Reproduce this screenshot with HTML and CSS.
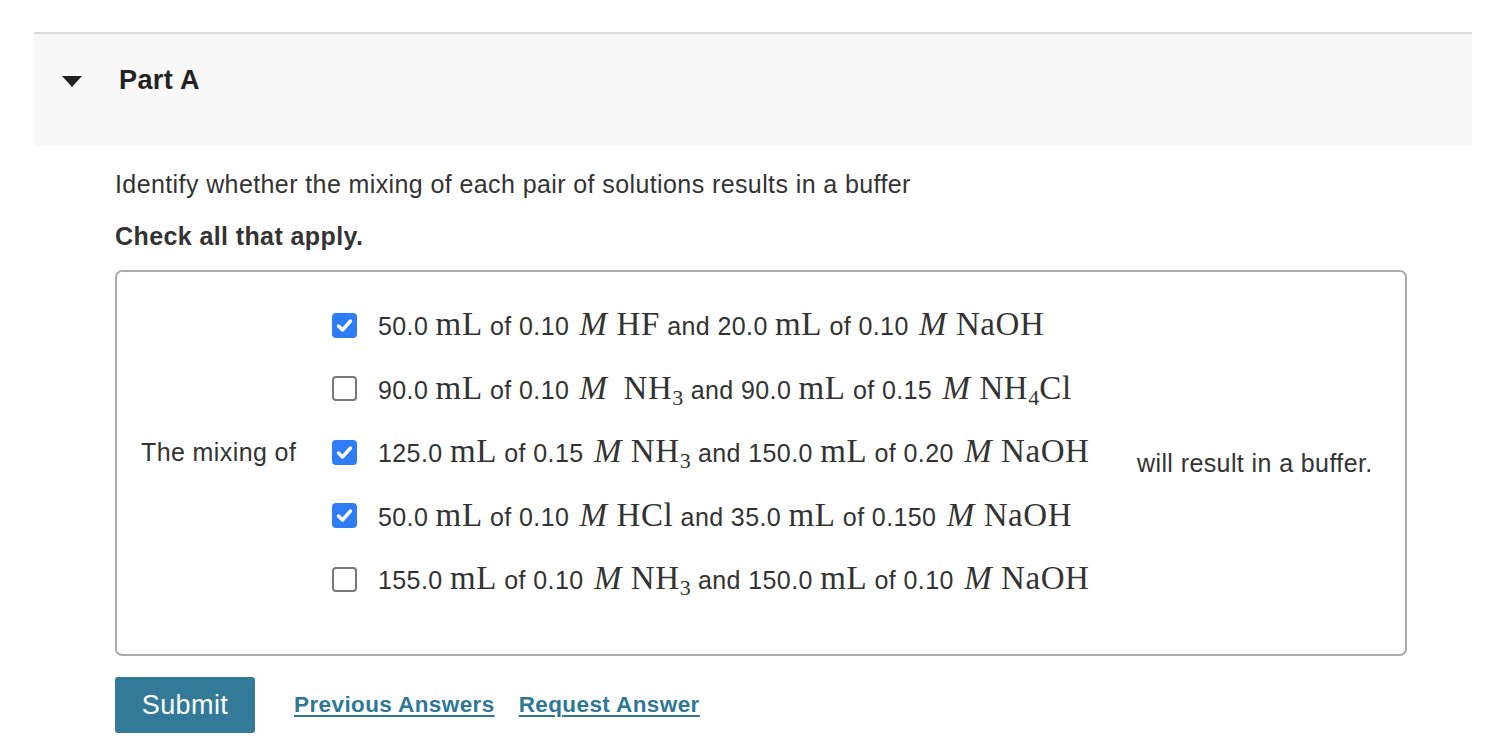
FILE: index.html
```html
<!DOCTYPE html>
<html lang="en">
<head>
<meta charset="utf-8">
<title>Part A</title>
<link rel="stylesheet" href="styles.css">
</head>
<body>
<div class="part">
  <div class="part-header">
    <svg class="caret" width="20" height="12" viewBox="0 0 20 12"><path d="M0 0 H20 L10 11 Z" fill="#222"/></svg>
    <h2 class="part-title">Part A</h2>
  </div>
  <div class="part-body">
    <p class="prompt">Identify whether the mixing of each pair of solutions results in a buffer</p>
    <p class="instr">Check all that apply.</p>
    <div class="answer-box">
      <div class="left-group">
        <div class="lead">The mixing of</div>
        <div class="options">
          <div class="row"><span class="cb on"><svg width="25" height="25" viewBox="0 0 25 25"><path d="M6.5 13 L10.5 17 L18.5 8" fill="none" stroke="#fff" stroke-width="3.4" stroke-linecap="round" stroke-linejoin="round"/></svg></span><span class="opt">50.0 <span class="m">mL</span> of 0.10 <span class="mi">M</span> <span class="m">HF</span> and 20.0 <span class="m">mL</span> of 0.10 <span class="mi">M</span> <span class="m">NaOH</span></span></div>
          <div class="row"><span class="cb"></span><span class="opt">90.0 <span class="m">mL</span> of 0.10 <span class="mi">M</span> <span class="m sp">NH<sub>3</sub></span> and 90.0 <span class="m">mL</span> of 0.15 <span class="mi">M</span> <span class="m">NH<sub>4</sub>Cl</span></span></div>
          <div class="row"><span class="cb on"><svg width="25" height="25" viewBox="0 0 25 25"><path d="M6.5 13 L10.5 17 L18.5 8" fill="none" stroke="#fff" stroke-width="3.4" stroke-linecap="round" stroke-linejoin="round"/></svg></span><span class="opt">125.0 <span class="m">mL</span> of 0.15 <span class="mi">M</span> <span class="m">NH<sub>3</sub></span> and 150.0 <span class="m">mL</span> of 0.20 <span class="mi">M</span> <span class="m">NaOH</span></span></div>
          <div class="row"><span class="cb on"><svg width="25" height="25" viewBox="0 0 25 25"><path d="M6.5 13 L10.5 17 L18.5 8" fill="none" stroke="#fff" stroke-width="3.4" stroke-linecap="round" stroke-linejoin="round"/></svg></span><span class="opt">50.0 <span class="m">mL</span> of 0.10 <span class="mi">M</span> <span class="m">HCl</span> and 35.0 <span class="m">mL</span> of 0.150 <span class="mi">M</span> <span class="m">NaOH</span></span></div>
          <div class="row"><span class="cb"></span><span class="opt">155.0 <span class="m">mL</span> of 0.10 <span class="mi">M</span> <span class="m">NH<sub>3</sub></span> and 150.0 <span class="m">mL</span> of 0.10 <span class="mi">M</span> <span class="m">NaOH</span></span></div>
        </div>
      </div>
      <div class="trail">will result in a buffer.</div>
    </div>
    <div class="actions">
      <button class="submit" type="button">Submit</button>
      <a class="link" href="#">Previous Answers</a>
      <a class="link" href="#">Request Answer</a>
    </div>
  </div>
</div>
</body>
</html>
```

FILE: styles.css
```css
html, body {
  margin: 0;
  padding: 0;
  background: #fff;
}
body {
  font-family: "Liberation Sans", Arial, sans-serif;
  color: #333;
  font-size: 25px;
  letter-spacing: 0.4px;
}
.part {
  margin: 32px 40px 0 34px;
  width: 1438px;
}
.part-header {
  border-top: 2px solid #dcdcdc;
  background: #f8f8f8;
  height: 114px;
  box-sizing: border-box;
  padding: 30px 0 0 28px;
  display: flex;
  align-items: flex-start;
}
.caret {
  margin-top: 12px;
  flex: none;
}
.part-title {
  margin: 0 0 0 37px;
  font-size: 27px;
  line-height: 32px;
  font-weight: bold;
  color: #222;
}
.part-body {
  padding: 23px 0 0 81px;
}
.prompt, .instr {
  margin: 0;
  line-height: 30px;
}
.instr {
  margin-top: 22px;
  font-weight: bold;
}
.answer-box {
  margin-top: 19px;
  width: 1292px;
  height: 386px;
  box-sizing: border-box;
  border: 2px solid #ababab;
  border-radius: 7px;
  display: flex;
  align-items: center;
}
.left-group {
  display: flex;
  align-items: center;
  padding: 21.25px 0 43.25px 24px;
}
.lead {
  width: 191px;
  flex: none;
}
.options {
  width: 805px;
  flex: none;
}
.row {
  height: 63.5px;
  display: flex;
  align-items: center;
}
.cb {
  width: 25px;
  height: 25px;
  box-sizing: border-box;
  border-radius: 4px;
  border: 2px solid #777;
  background: #fff;
  flex: none;
  margin-right: 21px;
  display: flex;
}
.cb.on {
  border: none;
  background: #2f7df6;
}
.opt {
  white-space: nowrap;
  line-height: 40px;
}
.m, .mi {
  font-family: "Liberation Serif", "Times New Roman", serif;
  font-size: 33px;
  letter-spacing: 0.6px;
}
.mi {
  font-style: italic;
  letter-spacing: 0;
  margin: 0 2px 0 3px;
}
.m.sp {
  margin-left: 7px;
}
.m sub {
  font-size: 22px;
  vertical-align: -6px;
  line-height: 0;
  letter-spacing: 0;
}
.trail {
  flex: none;
}
.actions {
  margin-top: 21px;
  display: flex;
  align-items: center;
}
.submit {
  width: 140px;
  height: 56px;
  background: #337a99;
  color: #fff;
  border: none;
  border-radius: 3px;
  font-family: "Liberation Sans", Arial, sans-serif;
  font-size: 27px;
  letter-spacing: 0.4px;
  padding: 0;
}
.link {
  font-size: 22.5px;
  font-weight: bold;
  color: #2f7797;
  text-decoration: underline;
  text-underline-offset: 3px;
  text-decoration-thickness: 2px;
  margin-left: 39px;
}
.link + .link {
  margin-left: 24px;
}
```
